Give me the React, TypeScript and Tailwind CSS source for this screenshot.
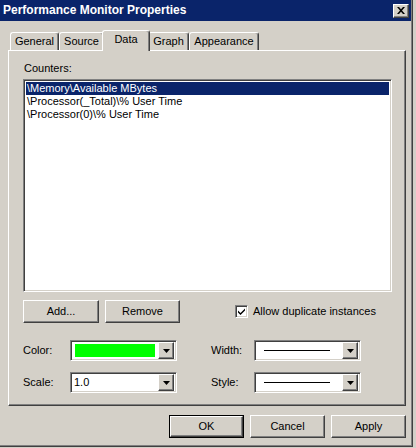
import React from 'react';

// Win2000-style property sheet. Colours are the classic 3D face/shadow set.
const raised =
  'border-t border-l border-t-white border-l-white border-r border-b border-r-[#404040] border-b-[#404040] shadow-[inset_-1px_-1px_0_#808080]';
const sunken =
  'border-t border-l border-t-[#808080] border-l-[#808080] border-r border-b border-r-white border-b-white shadow-[inset_1px_1px_0_#404040,inset_-1px_-1px_0_#d4d0c8]';

function Tab({ label, width, selected }: { label: string; width: number; selected?: boolean }) {
  return (
    <div
      className={
        'flex items-start justify-center rounded-t-[3px] border-t border-l border-t-white border-l-white border-r border-r-[#404040] shadow-[inset_-1px_0_0_#808080] bg-[#d4d0c8] ' +
        (selected ? 'relative z-10 h-[21px] -mx-[2px] -mb-[1px] pt-[2px]' : 'h-[18px] pt-[2px]')
      }
      style={{ width }}
    >
      {label}
    </div>
  );
}

function Button({ label, width, isDefault }: { label: string; width: number; isDefault?: boolean }) {
  return (
    <div className={'h-[23px] ' + (isDefault ? 'border border-black' : '')} style={{ width }}>
      <div className={'flex h-full w-full items-center justify-center bg-[#d4d0c8] ' + raised}>{label}</div>
    </div>
  );
}

function Arrow() {
  return (
    <div className={'flex h-[17px] w-[16px] items-center justify-center bg-[#d4d0c8] ' + raised}>
      <svg width="7" height="4" viewBox="0 0 7 4">
        <path d="M0 0h7L3.5 4z" fill="#000" />
      </svg>
    </div>
  );
}

function Combo({ children }: { children: React.ReactNode }) {
  return (
    <div className={'flex h-[21px] w-[107px] items-center bg-white pl-[2px] pr-[2px] ' + sunken}>
      <div className="flex h-full flex-1 items-center">{children}</div>
      <Arrow />
    </div>
  );
}

function LineSample() {
  return (
    <div className="flex flex-1 justify-center pr-[6px]">
      <div className="h-px w-[66px] bg-black" />
    </div>
  );
}

export default function App() {
  const counters = [
    '\\Memory\\Available MBytes',
    '\\Processor(_Total)\\% User Time',
    '\\Processor(0)\\% User Time',
  ];

  return (
    <div
      className="h-[448px] w-[416px] overflow-hidden bg-[#d4d0c8] text-[11px] leading-[13px] text-black"
      style={{ fontFamily: '"Liberation Sans", Arial, sans-serif' }}
    >
      <div className="h-[447px] w-[413px] border-r border-b border-[#404040]">
        <div className="flex h-[446px] w-[412px] flex-col border-r border-b border-[#808080]">
          {/* title bar */}
          <div className="flex h-[21px] items-center justify-between bg-[#0a246a] pl-[3px] pr-[2px]">
            <span className="text-[12px] font-bold text-white">Performance Monitor Properties</span>
            <div className={'flex h-[14px] w-[16px] items-center justify-center bg-[#d4d0c8] ' + raised}>
              <svg width="8" height="7" viewBox="0 0 8 7">
                <path d="M0 0h2l2 2.2L6 0h2L5 3.5 8 7H6L4 4.8 2 7H0l3-3.5z" fill="#000" />
              </svg>
            </div>
          </div>

          {/* tabs */}
          <div className="mt-[11px] flex h-[18px] items-end pl-[10px]">
            <Tab label="General" width={49} />
            <Tab label="Source" width={45} />
            <Tab label="Data" width={48} selected />
            <Tab label="Graph" width={41} />
            <Tab label="Appearance" width={70} />
          </div>

          {/* panel */}
          <div
            className={
              'ml-[8px] flex h-[356px] w-[398px] flex-col px-[14px] pt-[11px] border-t border-l border-t-white border-l-white border-r border-b border-r-[#404040] border-b-[#404040] shadow-[inset_-1px_-1px_0_#808080]'
            }
          >
            <div className="h-[13px] pl-[1px]">Counters:</div>
            <div className={'mt-[4px] h-[213px] w-[369px] bg-white p-[2px] ' + sunken}>
              {counters.map((c, i) => (
                <div
                  key={c}
                  className={'h-[13px] pl-[1px] ' + (i === 0 ? 'bg-[#0a246a] text-white' : '')}
                >
                  {c}
                </div>
              ))}
            </div>

            <div className="mt-[8px] flex items-center">
              <Button label="Add..." width={76} />
              <div className="w-[6px]" />
              <Button label="Remove" width={75} />
              <div className="ml-[55px] flex items-center gap-[5px]">
                <div className={'flex h-[13px] w-[13px] items-center justify-center bg-white ' + sunken}>
                  <svg width="7" height="7" viewBox="0 0 7 7">
                    <path d="M0 2.5v2l2.5 2.5 4.5-4.5v-2l-4.5 4.5z" fill="#000" />
                  </svg>
                </div>
                <span>Allow duplicate instances</span>
              </div>
            </div>

            <div className="mt-[17px] flex items-center">
              <span className="w-[47px]">Color:</span>
              <Combo>
                <div className="ml-[2px] mr-[3px] h-[13px] flex-1 bg-[#00ff00]" />
              </Combo>
              <span className="ml-[34px] w-[43px]">Width:</span>
              <Combo>
                <LineSample />
              </Combo>
            </div>

            <div className="mt-[11px] flex items-center">
              <span className="w-[47px]">Scale:</span>
              <Combo>
                <span className="pl-[1px]">1.0</span>
              </Combo>
              <span className="ml-[34px] w-[43px]">Style:</span>
              <Combo>
                <LineSample />
              </Combo>
            </div>
          </div>

          {/* bottom buttons */}
          <div className="mt-[9px] flex w-[406px] justify-end gap-[6px]">
            <Button label="OK" width={75} isDefault />
            <Button label="Cancel" width={75} />
            <Button label="Apply" width={75} />
          </div>
        </div>
      </div>
    </div>
  );
}
